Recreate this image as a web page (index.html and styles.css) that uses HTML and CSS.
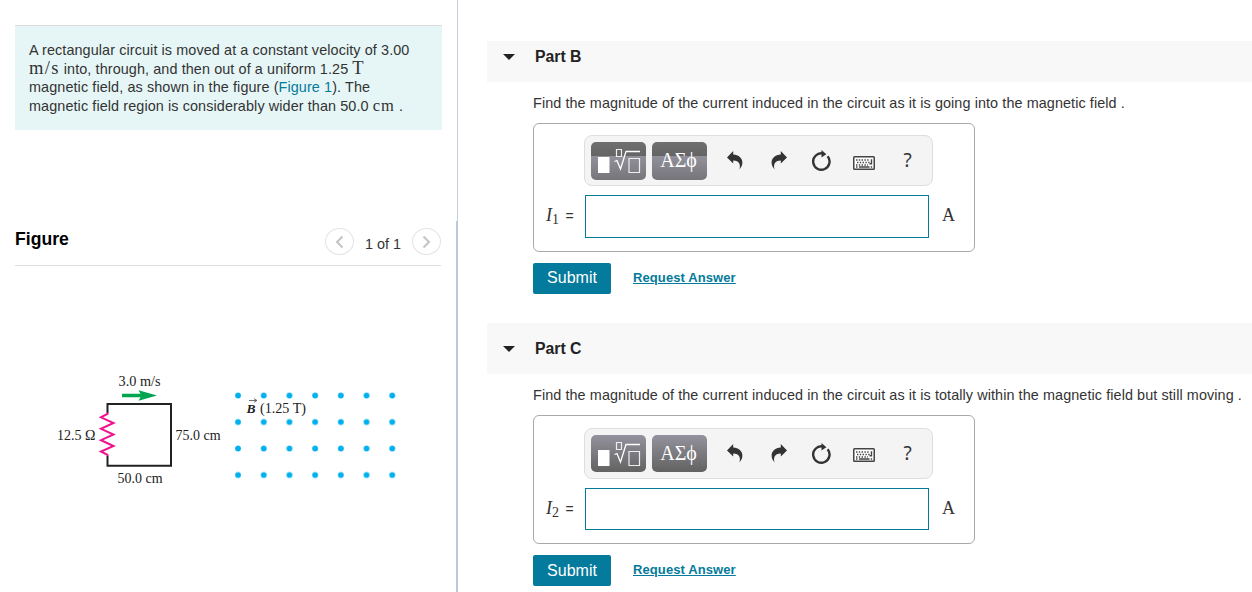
FILE: index.html
```html
<!DOCTYPE html>
<html lang="en">
<head>
  <meta charset="UTF-8">
  <title>Rectangular Circuit Problem</title>
  <link rel="stylesheet" href="styles.css">
</head>
<body>
  <!-- Shared icons -->
  <svg class="icon-defs">
    <symbol id="undo" viewBox="0 0 16 19">
      <path d="M0 6.4 6.2 0v3.4C11.8 3.8 15.4 7.2 15.4 11.6c0 2.8-1.2 4.8-3 6.8C13.8 13.8 12.6 9.6 6.2 9.4v3.2z" fill="#333"/>
    </symbol>
    <symbol id="reset" viewBox="0 0 20 21">
      <path d="M15.600 6.200A8.200 8.200 0 1 1 10.500 3.400" fill="none" stroke="#333" stroke-width="2.400"/>
      <path d="M9.500 0l4.900 4.300-4.900 3.200z" fill="#333"/>
    </symbol>
    <symbol id="keyboard" viewBox="0 0 22 14">
      <rect x=".75" y=".75" width="20.5" height="12.5" rx=".8" fill="#fff" stroke="#444" stroke-width="1.5"/>
      <path d="M3 4h14M4 6.5h13M3 9h12" stroke="#444" stroke-width="1.3" stroke-dasharray="1.4 1.4"/>
      <path d="M18.5 3.300v4.500h-2M6 11h10.500M3 11h1.500M17.700 11h1.500" fill="none" stroke="#444" stroke-width="1.4"/>
    </symbol>
    <symbol id="template" viewBox="0 0 44 26">
      <path d="M1 9h11.500v16H1z" fill="#fff"/>
      <path d="M19.500 1.500h5v7h-5zM32 10.500h10.500v14H32z" fill="none" stroke="#eee" stroke-width="1.200"/>
      <path d="M17.500 13.500l2.500-1 3.500 8.500L29 3.500h14" fill="none" stroke="#fff" stroke-width="1.300"/>
    </symbol>
  </svg>

  <!-- Problem statement and figure -->
  <div class="left-panel">
    <div class="problem">
      A rectangular circuit is moved at a constant velocity of 3.00<br>
      <span class="math">m/s</span> into, through, and then out of a uniform 1.25 <span class="math">T</span><br>
      magnetic field, as shown in the figure (<a href="#figure">Figure 1</a>). The<br>
      magnetic field region is considerably wider than 50.0 <span class="math small">cm</span> .
    </div>

    <div class="figure-panel" id="figure">
      <div class="figure-header">
        <h2>Figure</h2>
        <div class="pager">
          <span class="page-btn"><svg width="9" height="14" viewBox="0 0 9 14"><path d="M7.500 1.500 2 7l5.500 5.500"/></svg></span>
          <span class="page-count">1 of 1</span>
          <span class="page-btn"><svg width="9" height="14" viewBox="0 0 9 14"><path d="M1.500 1.500 7 7l-5.500 5.500"/></svg></span>
        </div>
      </div>
      <svg class="diagram" width="426" height="130" viewBox="15 366 426 130">
        <defs>
          <pattern id="dots" x="225.200" y="382.300" width="25.700" height="26.500" patternUnits="userSpaceOnUse">
            <circle cx="12.850" cy="13.250" r="2.900" fill="#00b0ee"/>
          </pattern>
        </defs>
        <path d="M107.500 413v-9H171v61.800h-63.500V456" fill="none" stroke="#222" stroke-width="2"/>
        <path d="M107.500 412.500v1.500l-6.500 3.300 12.500 5.700-12.500 5.800 12.500 5.700-12.500 5.700 12.500 5.800-12.500 5.500 6.500 3.300v1.500" fill="none" stroke="#f0128c" stroke-width="2"/>
        <path d="M122 393.800h18.500l-2-3.600 18.500 5.300-18.500 5.300 2-3.600H122z" fill="#00a550"/>
        <rect x="225.200" y="382.300" width="179.900" height="106" fill="url(#dots)"/>
        <path d="M249 400.500h7M254 398.700l3 1.800-3 1.800" fill="none" stroke="#333" stroke-width=".7"/>
        <g class="labels">
          <text x="118.500" y="386" textLength="42" lengthAdjust="spacingAndGlyphs">3.0 m/s</text>
          <text x="57" y="440" textLength="38.500" lengthAdjust="spacingAndGlyphs">12.5 Ω</text>
          <text x="175.500" y="440" textLength="45" lengthAdjust="spacingAndGlyphs">75.0 cm</text>
          <text x="117.500" y="483" textLength="45" lengthAdjust="spacingAndGlyphs">50.0 cm</text>
          <text x="246.500" y="413" class="vector">B</text>
          <text x="260" y="413" textLength="46" lengthAdjust="spacingAndGlyphs">(1.25 T)</text>
        </g>
      </svg>
    </div>
  </div>

  <!-- Question parts -->
  <div class="right-panel">
    <div class="part part-b">
      <div class="part-header"><span class="arrow"></span><h3>Part B</h3></div>
      <div class="part-body">
        <p class="question">Find the magnitude of the current induced in the circuit as it is going into the magnetic field .</p>
        <div class="answer-box">
          <div class="toolbar">
            <button class="tool"><svg width="44" height="26"><use href="#template"/></svg></button>
            <button class="tool greek">ΑΣϕ</button>
            <span class="icon"><svg width="16" height="19"><use href="#undo"/></svg></span>
            <span class="icon"><svg class="redo" width="16" height="19"><use href="#undo"/></svg></span>
            <span class="icon"><svg width="20" height="21"><use href="#reset"/></svg></span>
            <span class="icon key"><svg width="22" height="14"><use href="#keyboard"/></svg></span>
            <span class="icon help">?</span>
          </div>
          <div class="entry">
            <label for="i1"><i>I</i><sub>1</sub> <span class="eq">=</span></label>
            <input id="i1" type="text">
            <span class="unit">A</span>
          </div>
        </div>
        <div class="actions">
          <button class="submit">Submit</button>
          <a href="#" class="request">Request Answer</a>
        </div>
      </div>
    </div>

    <div class="part part-c">
      <div class="part-header"><span class="arrow"></span><h3>Part C</h3></div>
      <div class="part-body">
        <p class="question">Find the magnitude of the current induced in the circuit as it is totally within the magnetic field but still moving .</p>
        <div class="answer-box">
          <div class="toolbar">
            <button class="tool"><svg width="44" height="26"><use href="#template"/></svg></button>
            <button class="tool greek">ΑΣϕ</button>
            <span class="icon"><svg width="16" height="19"><use href="#undo"/></svg></span>
            <span class="icon"><svg class="redo" width="16" height="19"><use href="#undo"/></svg></span>
            <span class="icon"><svg width="20" height="21"><use href="#reset"/></svg></span>
            <span class="icon key"><svg width="22" height="14"><use href="#keyboard"/></svg></span>
            <span class="icon help">?</span>
          </div>
          <div class="entry">
            <label for="i2"><i>I</i><sub>2</sub> <span class="eq">=</span></label>
            <input id="i2" type="text">
            <span class="unit">A</span>
          </div>
        </div>
        <div class="actions">
          <button class="submit">Submit</button>
          <a href="#" class="request">Request Answer</a>
        </div>
      </div>
    </div>
  </div>
</body>
</html>
```
FILE: styles.css
```css
* {
  box-sizing: border-box;
}
body {
  margin: 0;
  height: 592px;
  display: flex;
  overflow: hidden;
  background: #fff;
  color: #333;
  font-family: "Liberation Sans", Arial, sans-serif;
  font-size: 14.4px;
}
h2, h3, p {
  margin: 0;
}
a {
  color: #047a9c;
}
.icon-defs {
  display: none;
}

/* Left panel */
.left-panel {
  width: 458px;
  flex: none;
  display: flex;
  flex-direction: column;
  align-items: flex-end;
  background: linear-gradient(#c8ccdc, #c8ccdc) right top / 1px 221px no-repeat;
}
.problem {
  width: 427px;
  height: 105px;
  margin: 25px 16px 91px 0;
  padding: 15px 14px;
  border-top: 1px solid #ddd;
  background: #e6f6f6;
  line-height: 18.7px;
  letter-spacing: .1px;
  white-space: nowrap;
}
.problem a {
  text-decoration: none;
}
.math {
  font-family: "Liberation Serif", serif;
  font-size: 18.5px;
  line-height: 1px;
  letter-spacing: 1.3px;
}
.math.small {
  font-size: 16.5px;
  letter-spacing: 1px;
}
.figure-panel {
  width: 443px;
  flex: 1;
  border-right: 2px solid #b8c9de;
}
.figure-header {
  display: flex;
  justify-content: space-between;
  width: 426px;
  height: 45px;
  padding-top: 7px;
  border-bottom: 1px solid #ddd;
}
.figure-header h2 {
  margin-top: 1px;
  font-size: 17.6px;
  line-height: 20px;
  color: #000;
}
.pager {
  display: flex;
}
.page-btn {
  display: flex;
  align-items: center;
  justify-content: center;
  width: 29px;
  height: 27px;
  border: 1px solid #e3e3e3;
  border-radius: 50%;
}
.page-btn path {
  fill: none;
  stroke: #c4c4c4;
  stroke-width: 2;
}
.page-count {
  width: 58px;
  text-align: center;
  line-height: 32px;
}
.diagram {
  display: block;
  margin-top: 100px;
}
.labels {
  font-family: "Liberation Serif", serif;
  font-size: 14.5px;
  fill: #222;
}
.vector {
  font-size: 13.5px;
  font-weight: bold;
  font-style: italic;
}

/* Question parts */
.right-panel {
  flex: 1;
  padding: 41px 0 0 29px;
}
.part-header {
  display: flex;
  align-items: center;
  height: 41px;
  padding: 0 0 10px 16px;
  background: #f8f8f8;
}
.arrow {
  border: 6px solid transparent;
  border-top: 6px solid #222;
  border-bottom: 0;
}
.part-header h3 {
  margin-left: 20px;
  font-size: 15.8px;
  line-height: 20px;
  color: #222;
}
.part-b {
  height: 282px;
}
.part-c .part-header {
  height: 51px;
  padding-bottom: 0;
}
.part-c h3 {
  padding-top: 1px;
}
.part-body {
  padding: 12px 0 0 46px;
}
.question {
  line-height: 18px;
  letter-spacing: .09px;
  white-space: nowrap;
}
.answer-box {
  width: 442px;
  height: 129px;
  margin-top: 11px;
  padding: 11px 0 0 12px;
  border: 1px solid #a9a9a9;
  border-radius: 6px;
}
.part-c .answer-box {
  padding-top: 12px;
}
.toolbar {
  display: flex;
  align-items: center;
  width: 349px;
  height: 51px;
  margin-left: 38px;
  padding-left: 6px;
  background: #f4f4f4;
  border: 1px solid #dedede;
  border-radius: 8px;
}
.tool {
  display: flex;
  align-items: center;
  justify-content: center;
  width: 55px;
  height: 38px;
  margin-right: 6px;
  padding: 0;
  border: 0;
  border-radius: 5px;
  background: linear-gradient(#6f6f6f 0%, #656565 36%, #92919b 37%, #75757a 100%);
  color: #fff;
}
.part-c .tool {
  height: 37px;
  background: linear-gradient(#94929d, #626262);
}
.tool.greek {
  padding: 0 2px 1px 0;
  font-family: "Liberation Serif", serif;
  font-size: 20px;
}
.icon {
  display: flex;
  align-items: center;
  justify-content: center;
  width: 43px;
  height: 38px;
}
.greek + .icon {
  width: 44px;
}
.redo {
  transform: scaleX(-1);
}
.key {
  padding: 4px 1px 0 0;
}
.part-c .key {
  padding-top: 3px;
}
.help {
  padding-bottom: 1px;
  font-family: "Noto Sans", sans-serif;
  font-size: 19px;
}
.entry {
  display: flex;
  align-items: center;
  margin-top: 9px;
  font-family: "Liberation Serif", serif;
  font-size: 18px;
}
.entry label {
  width: 39px;
  padding-bottom: 2px;
  white-space: nowrap;
}
.entry sub {
  margin-right: 2px;
  font-size: 14px;
  line-height: 1px;
  vertical-align: -3px;
}
.eq {
  font-family: "Liberation Sans", Arial, sans-serif;
  font-size: 14px;
}
.entry input {
  width: 344px;
  height: 43px;
  border: 1px solid #047a9c;
  background: #fff;
}
.part-c .entry input {
  height: 42px;
}
.unit {
  margin-left: 13px;
  padding-bottom: 2px;
}
.actions {
  display: flex;
  align-items: center;
  margin-top: 11px;
}
.submit {
  width: 78px;
  height: 31px;
  padding: 0 0 2px;
  border: 0;
  border-radius: 2px;
  background: #047a9c;
  color: #fff;
  font-family: "Liberation Sans", Arial, sans-serif;
  font-size: 16px;
}
.part-c .submit {
  padding-bottom: 0;
}
.request {
  margin: 0 0 2px 22px;
  font-size: 13px;
  font-weight: bold;
  letter-spacing: .1px;
}
```
